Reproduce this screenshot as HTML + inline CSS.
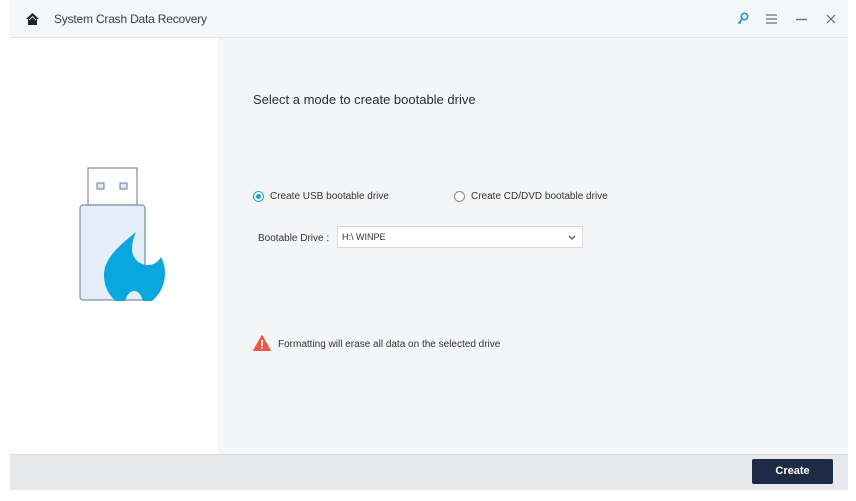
<!DOCTYPE html>
<html><head><meta charset="utf-8"><style>
*{margin:0;padding:0;box-sizing:border-box}
body{width:856px;height:501px;background:#fff;font-family:"Liberation Sans",sans-serif;position:relative;overflow:hidden;color:#333}
.title{position:absolute;left:10px;top:0;width:838px;height:38px;background:#f5f6f8;border-bottom:1px solid #e3e5e8}
.title .t{position:absolute;left:44px;top:12px;font-size:12px;color:#3a3f48;letter-spacing:-0.2px}
.left{position:absolute;left:10px;top:38px;width:208px;height:416px;background:#fff}
.right{position:absolute;left:218px;top:38px;width:630px;height:416px;background:#f4f5f7}
.foot{position:absolute;left:10px;top:454px;width:838px;height:36px;background:#e6e8eb;border-top:1px solid #d8dadd}
.btn{position:absolute;left:752px;top:459px;width:81px;height:25px;background:#1f2b45;border-radius:2px;color:#fff;font-size:11px;font-weight:bold;text-align:center;line-height:25px}
.txt{position:absolute;font-size:10px;color:#333;white-space:nowrap}
.radio{position:absolute;width:11px;height:11px;border-radius:50%;border:1px solid #888;background:#fff}
.radio.on{border-color:#1aa0dc}
.radio.on::after{content:"";position:absolute;left:2px;top:2px;width:5px;height:5px;border-radius:50%;background:#1aa0dc}
.sel{position:absolute;left:337px;top:226px;width:246px;height:22px;background:#fff;border:1px solid #d6d8dc}
</style></head><body>
<div class="title">
<svg style="position:absolute;left:16px;top:13px" width="13" height="12" viewBox="0 0 13 12"><path d="M6.5 0L0 6h2v6h9V6h2z" fill="#1f2533"/><path d="M6.5 3L3 6.5v1L6.5 4.2 10 7.5v-1z" fill="#f5f6f8"/></svg>
<div class="t">System Crash Data Recovery</div>
<svg style="position:absolute;left:727px;top:12px" width="12" height="13" viewBox="0 0 12 13"><circle cx="7.5" cy="4.5" r="3.2" fill="none" stroke="#1a9ad6" stroke-width="1.6"/><path d="M5.2 6.8L1.5 11.5M2.5 10.2l1.5 1.2" stroke="#1a9ad6" stroke-width="1.6" fill="none"/></svg>
<svg style="position:absolute;left:756px;top:14px" width="11" height="10"><path d="M0 1h11M0 5h11M0 9h11" stroke="#6a6f78" stroke-width="1.2"/></svg>
<svg style="position:absolute;left:786px;top:14px" width="11" height="10"><path d="M0 5.5h11" stroke="#6a6f78" stroke-width="1.4"/></svg>
<svg style="position:absolute;left:816px;top:14px" width="10" height="10"><path d="M1 1l8 8M9 1l-8 8" stroke="#6a6f78" stroke-width="1.2"/></svg>
</div>
<div class="left"></div>
<svg style="position:absolute;left:0;top:0" width="218" height="320">
<rect x="88" y="168" width="49" height="37" fill="#fff" stroke="#7d8fa0" stroke-width="1.2"/>
<rect x="97" y="183" width="7" height="6" fill="#dde8f2" stroke="#6d7f90"/>
<rect x="120" y="183" width="7" height="6" fill="#dde8f2" stroke="#6d7f90"/>
<rect x="80" y="205" width="65" height="95" rx="3" fill="#e3eef8" stroke="#7d8fa0" stroke-width="1.2"/>
<path d="M136,232 C120,245 104,258 104,275 C104,288 110,296 116,301 L125,301 C127,294 131,291 134,291 C138,291 141,294 143,301 L152,301 C160,294 165,285 165,273 C165,266 163,261 161,257 C158,262 154,265 148,265 C138,265 132,257 132,249 C132,242 134,237 136,232Z" fill="#0aa6e0"/>
</svg>
<div class="right"></div>
<div class="txt" style="left:253px;top:92px;font-size:13px;color:#2a2e35">Select a mode to create bootable drive</div>
<div class="radio on" style="left:253px;top:191px"></div>
<div class="txt" style="left:270px;top:191px">Create USB bootable drive</div>
<div class="radio" style="left:454px;top:191px"></div>
<div class="txt" style="left:471px;top:191px">Create CD/DVD bootable drive</div>
<div class="txt" style="left:258px;top:233px">Bootable Drive :</div>
<div class="sel"><div class="txt" style="left:4px;top:5px;font-size:9px">H:\ WINPE</div>
<svg style="position:absolute;right:6px;top:8px" width="8" height="6"><path d="M1 1l3 3 3-3" stroke="#555" stroke-width="1.3" fill="none"/></svg></div>
<svg style="position:absolute;left:253px;top:335px" width="18" height="16" viewBox="0 0 18 16"><path d="M9 0.5L17.5 15.5H0.5z" fill="#ec5a44" stroke="#ec5a44" stroke-linejoin="round"/><rect x="8.2" y="5" width="1.6" height="6" fill="#fff"/><rect x="8.2" y="12" width="1.6" height="1.6" fill="#fff"/></svg>
<div class="txt" style="left:278px;top:339px">Formatting will erase all data on the selected drive</div>
<div class="foot"></div>
<div class="btn">Create</div>
</body></html>
